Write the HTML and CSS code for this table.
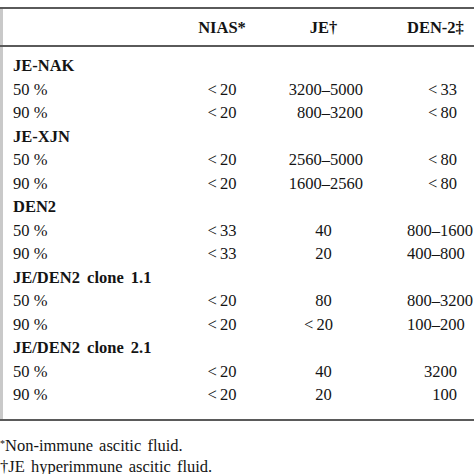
FILE: index.html
```html
<!DOCTYPE html>
<html>
<head>
<meta charset="utf-8">
<link rel="stylesheet" href="styles.css">
</head>
<body>
<div class="table">
  <div class="frame">
    <div class="grid head">
      <div></div>
      <div class="c">NIAS*</div>
      <div class="c">JE†</div>
      <div class="l">DEN-2‡</div>
    </div>
    <div class="body">
      <div class="grid"><div class="grp">JE-NAK</div></div>
      <div class="grid"><div>50 %</div><div class="c">&lt;&#8201;20</div><div class="rj">3200–5000</div><div class="rd">&lt;&#8201;33</div></div>
      <div class="grid"><div>90 %</div><div class="c">&lt;&#8201;20</div><div class="rj">800–3200</div><div class="rd">&lt;&#8201;80</div></div>
      <div class="grid"><div class="grp">JE-XJN</div></div>
      <div class="grid"><div>50 %</div><div class="c">&lt;&#8201;20</div><div class="rj">2560–5000</div><div class="rd">&lt;&#8201;80</div></div>
      <div class="grid"><div>90 %</div><div class="c">&lt;&#8201;20</div><div class="rj">1600–2560</div><div class="rd">&lt;&#8201;80</div></div>
      <div class="grid"><div class="grp">DEN2</div></div>
      <div class="grid"><div>50 %</div><div class="c">&lt;&#8201;33</div><div class="c">40</div><div class="l">800–1600</div></div>
      <div class="grid"><div>90 %</div><div class="c">&lt;&#8201;33</div><div class="c">20</div><div class="l">400–800</div></div>
      <div class="grid"><div class="grp">JE/DEN2 clone 1.1</div></div>
      <div class="grid"><div>50 %</div><div class="c">&lt;&#8201;20</div><div class="c">80</div><div class="l">800–3200</div></div>
      <div class="grid"><div>90 %</div><div class="c">&lt;&#8201;20</div><div class="c lt">&lt;&#8201;20</div><div class="l">100–200</div></div>
      <div class="grid"><div class="grp">JE/DEN2 clone 2.1</div></div>
      <div class="grid"><div>50 %</div><div class="c">&lt;&#8201;20</div><div class="c">40</div><div class="rd">3200</div></div>
      <div class="grid"><div>90 %</div><div class="c">&lt;&#8201;20</div><div class="c">20</div><div class="rd">100</div></div>
    </div>
  </div>
</div>
<div class="notes">
  <p><sup>*</sup>Non-immune ascitic fluid.</p>
  <p>†JE hyperimmune ascitic fluid.</p>
</div>
</body>
</html>
```

FILE: styles.css
```css
html, body {
  margin: 0;
  padding: 0;
  background: #fff;
}
body {
  width: 474px;
  height: 474px;
  overflow: hidden;
  font-family: "Liberation Serif", "Times New Roman", serif;
  font-size: 16.5px;
  color: #141414;
}
.table {
  margin-top: 7px;
  border-top: 2px solid #5a5a5a;
  border-bottom: 2px solid #5a5a5a;
  width: 480px;
}
.frame {
  border-left: 3px solid #c9c9c9;
}
.grid {
  display: grid;
  grid-template-columns: 184px 50px 153px 1fr;
  height: 23.5px;
  line-height: 23.5px;
  padding-left: 10px;
  white-space: nowrap;
}
.head {
  height: 36px;
  line-height: 38px;
  font-weight: bold;
  border-bottom: 2px solid #5a5a5a;
  margin-left: -3px;
  padding-left: 13px;
}
.body {
  padding-top: 7px;
  padding-bottom: 12px;
}
.grp {
  font-weight: bold;
  word-spacing: 3px;
}
.c { text-align: center; }
.l { text-align: left; padding-left: 7px; }
.rj { text-align: right; padding-right: 37px; }
.rd { text-align: right; padding-right: 23px; }
.lt { padding-right: 10px; }
.notes {
  margin-top: 14px;
  font-size: 16.5px;
  word-spacing: 2px;
}
.notes p {
  margin: 0;
  line-height: 21px;
}
sup {
  font-size: 10px;
  vertical-align: 4px;
  line-height: 0;
}
```
